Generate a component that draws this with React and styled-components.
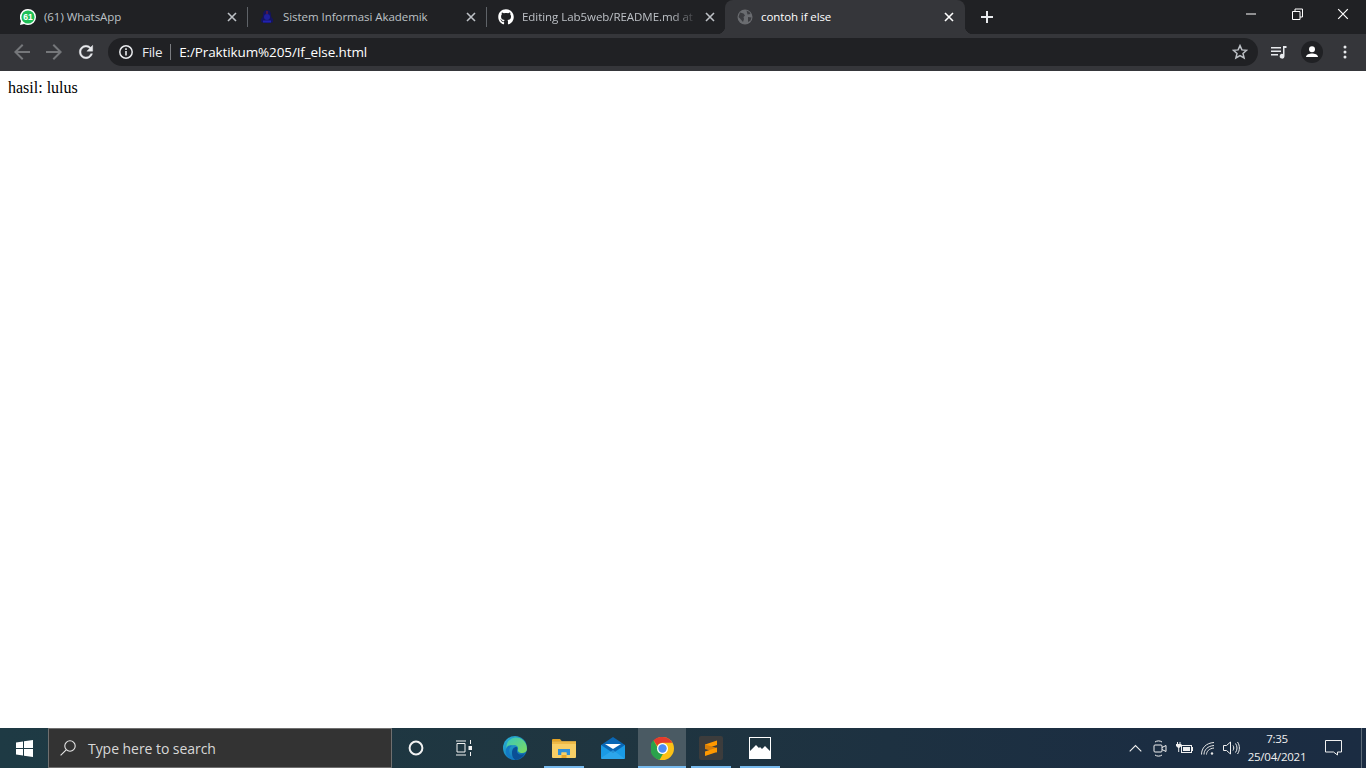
import React from "react";
import styled, { createGlobalStyle } from "styled-components";
import { FaGithub } from "react-icons/fa";

const Global = createGlobalStyle`
  html, body { margin: 0; padding: 0; overflow: hidden; background: #fff; }
`;

const UI = `"Open Sans", "Noto Sans", "Liberation Sans", sans-serif`;

const Page = styled.div`
  display: flex;
  flex-direction: column;
  width: 1366px;
  height: 768px;
`;

/* ---------- tab strip ---------- */
const TabStrip = styled.div`
  display: flex;
  align-items: stretch;
  height: 34px;
  padding-left: 8px;
  background: #202124;
  flex: none;
`;
const Tab = styled.div`
  position: relative;
  display: flex;
  align-items: center;
  width: ${(p) => (p.$active ? "240px" : "239px")};
  padding: 0 ${(p) => (p.$active ? "8px" : "7px")} 0 12px;
  box-sizing: border-box;
  background: ${(p) => (p.$active ? "#35363a" : "transparent")};
  border-radius: 8px 8px 0 0;
  ${(p) =>
    p.$active
      ? `
    &::before, &::after {
      content: "";
      position: absolute;
      bottom: 0;
      width: 8px;
      height: 8px;
    }
    &::before { left: -8px; background: radial-gradient(circle at 0 0, transparent 8px, #35363a 8.5px); }
    &::after { right: -8px; background: radial-gradient(circle at 100% 0, transparent 8px, #35363a 8.5px); }
  `
      : ""}
  ${(p) =>
    p.$divider
      ? `
    &::after {
      content: "";
      position: absolute;
      right: -1px;
      top: 7px;
      width: 1px;
      height: 20px;
      background: #5f6368;
    }
  `
      : ""}
`;
const Favicon = styled.span`
  display: flex;
  width: 16px;
  height: 16px;
  flex: none;
  margin-right: 8px;
  color: #fff;
`;
const TabTitle = styled.span`
  flex: 1;
  min-width: 0;
  padding-bottom: 2px;
  overflow: hidden;
  white-space: nowrap;
  font: ${(p) => (p.$active ? 500 : 400)} 11.5px ${UI};
  letter-spacing: ${(p) => (p.$active ? "-0.1px" : "-0.05px")};
  color: ${(p) => (p.$active ? "#fff" : "#bdc1c6")};
  ${(p) =>
    p.$fade
      ? `mask-image: linear-gradient(to right, #000 85%, transparent 100%);`
      : ""}
`;
const TabClose = styled.span`
  display: flex;
  align-items: center;
  justify-content: center;
  width: 16px;
  height: 16px;
  flex: none;
  margin-left: 4px;
  color: ${(p) => (p.$active ? "#fff" : "#bdc1c6")};
`;
const NewTab = styled.div`
  display: flex;
  align-items: center;
  justify-content: center;
  width: 28px;
  margin-left: 8px;
  color: #e8eaed;
`;
const Spacer = styled.div`
  flex: 1;
`;
const WinButton = styled.div`
  display: flex;
  align-items: flex-start;
  justify-content: center;
  width: 46px;
  padding-top: 8px;
  box-sizing: border-box;
  color: #fff;
`;

/* ---------- toolbar ---------- */
const Toolbar = styled.div`
  display: flex;
  align-items: center;
  height: 37px;
  padding: 0 5px 1px 6px;
  box-sizing: border-box;
  background: #35363a;
  flex: none;
`;
const NavButton = styled.div`
  display: flex;
  align-items: center;
  justify-content: center;
  width: 32px;
  height: 28px;
  flex: none;
  color: ${(p) => (p.$off ? "#75777a" : "#e8eaed")};
`;
const Omnibox = styled.div`
  display: flex;
  align-items: center;
  flex: 1;
  height: 28px;
  margin-left: 6px;
  margin-right: 4px;
  padding: 0 10px 0 10px;
  border-radius: 14px;
  background: #202124;
`;
const InfoSlot = styled.span`
  display: flex;
  width: 16px;
  height: 16px;
  margin-right: 8px;
  color: #e8eaed;
`;
const Scheme = styled.span`
  font: 400 13.5px ${UI};
  letter-spacing: -0.3px;
  color: #e8eaed;
`;
const Divider = styled.span`
  width: 1px;
  height: 16px;
  margin: 0 8px 0 8px;
  background: #7a7c80;
`;
const Url = styled.span`
  flex: 1;
  font: 400 13.5px ${UI};
  letter-spacing: -0.12px;
  color: #fff;
`;
const StarSlot = styled.span`
  display: flex;
  color: #bdc1c6;
`;
const ToolIcon = styled.div`
  display: flex;
  align-items: center;
  justify-content: center;
  width: 33px;
  height: 28px;
  flex: none;
  color: #e8eaed;
`;

/* ---------- page ---------- */
const Content = styled.main`
  flex: 1;
  padding: 8px;
  background: #fff;
  color: #000;
  font: 16px/18px "Liberation Serif", serif;
`;

/* ---------- taskbar ---------- */
const Taskbar = styled.footer`
  display: flex;
  align-items: stretch;
  height: 40px;
  flex: none;
  background: linear-gradient(to right, #1e3a44 0%, #1f3540 45%, #1b2d42 85%, #1b2c42 100%);
  color: #fff;
`;
const StartButton = styled.div`
  display: flex;
  align-items: center;
  justify-content: center;
  width: 48px;
`;
const SearchBox = styled.div`
  display: flex;
  align-items: center;
  width: 344px;
  padding-left: 11px;
  box-sizing: border-box;
  background: #333333;
  border: 1px solid #6f6f6f;
`;
const SearchText = styled.span`
  margin-left: 12px;
  font: 400 14px ${UI};
  letter-spacing: -0.05px;
  color: #d8d8d8;
`;
const TaskItem = styled.div`
  position: relative;
  display: flex;
  align-items: center;
  justify-content: center;
  width: 48px;
  margin-left: ${(p) => p.$ml || 0}px;
  background: ${(p) => (p.$focus ? "#4a5a63" : "transparent")};
  ${(p) =>
    p.$running
      ? `
    &::after {
      content: "";
      position: absolute;
      bottom: 0;
      left: ${p.$focus ? 0 : 4}px;
      right: ${p.$focus ? 0 : 4}px;
      height: 2px;
      background: #76b9ed;
    }
  `
      : ""}
`;
const Tray = styled.div`
  display: flex;
  align-items: center;
  margin-left: auto;
`;
const TrayIcon = styled.span`
  display: flex;
  align-items: center;
  justify-content: center;
  width: ${(p) => p.$w || 24}px;
`;
const Clock = styled.div`
  width: 70px;
  padding-bottom: 1px;
  text-align: center;
  font: 400 11.5px/18px ${UI};
  letter-spacing: -0.25px;
  color: #f0f0f0;
`;
const ClockLine = styled.div``;
const Notify = styled.div`
  display: flex;
  align-items: center;
  justify-content: center;
  width: 42px;
  padding-right: 7px;
`;
const ShowDesktop = styled.div`
  align-self: stretch;
  width: 5px;
  border-left: 1px solid #5d6b78;
  box-sizing: border-box;
`;

/* ---------- drawings ---------- */
const X = ({ s = 10, w = 1.6 }) => (
  <svg width={s} height={s} viewBox="0 0 10 10">
    <path d="M1 1l8 8M9 1L1 9" stroke="currentColor" strokeWidth={w} fill="none" />
  </svg>
);
const WhatsApp = () => (
  <svg width="16" height="16" viewBox="0 0 16 16">
    <path d="M8 0a8 8 0 0 1 0 16c-1.400 0-2.800-.4-3.900-1L0 16l1-4A8 8 0 0 1 8 0z" fill="#fff" />
    <circle cx="8" cy="8" r="6.600" fill="#1fbf57" />
    <text x="8" y="11" textAnchor="middle" fontSize="8.500" fontWeight="700" fontFamily="Liberation Sans, sans-serif" fill="#fff">61</text>
  </svg>
);
const Crest = () => (
  <svg width="16" height="16" viewBox="0 0 16 16">
    <path d="M8 1c3 0 4 2.500 4 5 0 2 1 3 2 4v3c-1 1.500-10 1.500-12 0v-3c1-1 2-2 2-4 0-2.500 1-5 4-5z" fill="#14145e" />
    <circle cx="8" cy="8" r="3" fill="#1f1f9c" />
    <path d="M7.500 2h1v3h-1z" fill="#8a1f30" />
    <path d="M4 11.500h8v2H4z" fill="#2222b0" />
  </svg>
);
const Globe = () => (
  <svg width="16" height="16" viewBox="0 0 16 16">
    <circle cx="8" cy="8" r="7.500" fill="#6a6c70" />
    <path d="M3 3.500l3.500 1 1.500 2-1.500 1.500.5 2-1 3L3 9.500 1.500 8zM9.500 1.500l3 1.500 1 2-3 .5zM11 8l3.500.5-1 3-2.500 1.500z" fill="#3c3d41" />
  </svg>
);
const Back = () => (
  <svg width="16" height="16" viewBox="0 0 16 16">
    <path d="M16 7H3.830l5.590-5.590L8 0 0 8l8 8 1.410-1.410L3.830 9H16z" fill="currentColor" />
  </svg>
);
const Forward = () => (
  <svg width="16" height="16" viewBox="0 0 16 16">
    <path d="M0 7h12.170L6.580 1.410 8 0l8 8-8 8-1.410-1.410L12.170 9H0z" fill="currentColor" />
  </svg>
);
const Reload = () => (
  <svg width="20" height="20" viewBox="0 0 24 24">
    <path d="M17.650 6.350C16.200 4.900 14.210 4 12 4c-4.420 0-7.990 3.580-7.990 8s3.570 8 7.990 8c3.730 0 6.840-2.550 7.730-6h-2.080c-.82 2.330-3.040 4-5.650 4-3.310 0-6-2.690-6-6s2.690-6 6-6c1.660 0 3.140.69 4.220 1.780L13 11h7V4l-2.350 2.350z" fill="currentColor" stroke="currentColor" strokeWidth="0.500" />
  </svg>
);
const Info = () => (
  <svg width="16" height="16" viewBox="0 0 16 16">
    <circle cx="8" cy="8" r="6.200" fill="none" stroke="currentColor" strokeWidth="1.500" />
    <path d="M7.200 7h1.600v4.500H7.200zM7.200 4.300h1.600v1.600H7.200z" fill="currentColor" />
  </svg>
);
const Star = () => (
  <svg width="16" height="16" viewBox="0 0 16 16">
    <path d="M8 1.600l1.900 4.300 4.700.4-3.600 3.100 1.100 4.600L8 11.600 3.900 14l1.100-4.600-3.600-3.100 4.700-.4z" fill="none" stroke="currentColor" strokeWidth="1.500" />
  </svg>
);
const Media = () => (
  <svg width="16" height="14" viewBox="0 0 16 14">
    <path d="M0 2h10v1.400H0zM0 5.500h10v1.400H0zM0 9h7v1.400H0z" fill="currentColor" />
    <path d="M12 1h3.500v2H13.500v8.200a2.400 2.400 0 1 1-1.500-2.200z" fill="currentColor" />
  </svg>
);
const Avatar = () => (
  <svg width="22" height="22" viewBox="0 0 22 22">
    <circle cx="11" cy="11" r="11" fill="#202124" />
    <circle cx="11" cy="8.200" r="3" fill="#fff" />
    <path d="M5 16c0-2.500 3.500-3.600 6-3.600s6 1.100 6 3.600z" fill="#fff" />
  </svg>
);
const Kebab = () => (
  <svg width="4" height="14" viewBox="0 0 4 14">
    <circle cx="2" cy="2" r="1.500" fill="currentColor" />
    <circle cx="2" cy="7" r="1.500" fill="currentColor" />
    <circle cx="2" cy="12" r="1.500" fill="currentColor" />
  </svg>
);
const Plus = () => (
  <svg width="14" height="14" viewBox="0 0 14 14">
    <path d="M6 1h2v5h5v2H8v5H6V8H1V6h5z" fill="currentColor" />
  </svg>
);
const Minimize = () => (
  <svg width="10" height="14" viewBox="0 0 10 14">
    <path d="M0 6h10" stroke="currentColor" strokeWidth="1" />
  </svg>
);
const Restore = () => (
  <svg width="11" height="14" viewBox="0 0 11 14" fill="none" stroke="currentColor">
    <path d="M.5 3.500h7.500v8H.5zM3 3.500v-2.500h7.500v8H8" />
  </svg>
);
const WinLogo = () => (
  <svg width="17" height="17" viewBox="0 0 17 17">
    <path d="M0 2.500l7-1v6.500H0zM8 1.300L17 0v8H8zM0 9h7v6.500l-7-1zM8 9h9v8l-9-1.300z" fill="#fff" />
  </svg>
);
const SearchGlass = () => (
  <svg width="16" height="16" viewBox="0 0 16 16" fill="none" stroke="#e6e6e6" strokeWidth="1.100">
    <circle cx="10" cy="6" r="5.200" />
    <path d="M6.200 9.800L.6 15.400" />
  </svg>
);
const Cortana = () => (
  <svg width="16" height="16" viewBox="0 0 16 16">
    <circle cx="8" cy="8" r="6.400" fill="none" stroke="#f2f2f2" strokeWidth="2" />
  </svg>
);
const TaskView = () => (
  <svg width="16" height="16" viewBox="0 0 16 16" fill="none" stroke="#f2f2f2" strokeWidth="1">
    <path d="M0 1h10M1 3.500h8v8.500H1zM0 15h10M14.500 0v4M14.500 12v4" />
    <path d="M12.500 6h4v4h-4z" fill="#f2f2f2" stroke="none" />
  </svg>
);
const Edge = () => (
  <svg width="24" height="24" viewBox="0 0 24 24">
    <defs>
      <linearGradient id="edgeA" x1="0" y1="0" x2="1" y2="1">
        <stop offset="0" stopColor="#2bb6d8" />
        <stop offset="1" stopColor="#0c5fa8" />
      </linearGradient>
      <linearGradient id="edgeB" x1="0" y1="0" x2="1" y2="1">
        <stop offset="0" stopColor="#39c7bd" />
        <stop offset="1" stopColor="#7fdb5c" />
      </linearGradient>
    </defs>
    <circle cx="12" cy="12" r="12" fill="url(#edgeA)" />
    <path d="M8 3C14 -1 24 3 24 13c0 3-3 4.500-6 4-3-.5-3.500-2.500-3-4 .5-2-1-4-4-4-3.500 0-6.500 2.500-7.500 5C3 9 4 5 8 3z" fill="url(#edgeB)" />
    <path d="M9 17c0-4 2-6 4.500-6 1 .5 1 1.500.5 3-.5 2.500 1.500 5 5 4.500 1 0 2-.5 2.500-1-2 4-5 6-9 6.500-2.500-1-3.500-4-3.500-7z" fill="#0b4f96" />
    <path d="M10 10c-2.500 0-4.500 3-3.500 7 .6 2.500 2.500 5 5.500 6.500C10 24 7 23 5 21 2 18 2 12 5 10c2-1.300 4-1 5 0z" fill="#1379c4" />
  </svg>
);
const Explorer = () => (
  <svg width="24" height="20" viewBox="0 0 24 20">
    <path d="M0 2a1 1 0 0 1 1-1h7l2 2.500H0z" fill="#e3a325" />
    <path d="M0 3.500h24V19a1 1 0 0 1-1 1H1a1 1 0 0 1-1-1z" fill="#f7cf66" />
    <path d="M0 3h24v3H0z" fill="#e9b13a" opacity="0.7" />
    <path d="M6 11h12v6h-3.500v-2.500h-5V17H6z" fill="#2f8fd8" />
    <path d="M9.500 14.500h5V20h-5z" fill="#f7cf66" />
    <path d="M9.500 17h5v3h-5z" fill="#e8a72a" />
  </svg>
);
const Mail = () => (
  <svg width="24" height="22" viewBox="0 0 24 22">
    <path d="M0 8L12 0l12 8v1L12 16 0 9z" fill="#0a67b5" />
    <path d="M4 7h16l-8 5z" fill="#fff" />
    <path d="M0 8l12 8 12-8v13a1 1 0 0 1-1 1H1a1 1 0 0 1-1-1z" fill="#1a9be6" />
    <path d="M0 21l12-8 12 9H1z" fill="#38aeee" opacity="0.6" />
  </svg>
);
const Chrome = () => (
  <svg width="23" height="23" viewBox="0 0 48 48">
    <circle cx="24" cy="24" r="24" fill="#fbc116" />
    <path d="M24 0a24 24 0 0 1 20.800 12H24a12 12 0 0 0-10.900 7L5 7A24 24 0 0 1 24 0z" fill="#e33b2e" />
    <path d="M5 7l10 17a10 10 0 0 0 11 9.500L18 47.300A24 24 0 0 1 5 7z" fill="#2ba24c" />
    <circle cx="24" cy="24" r="11.500" fill="#fff" />
    <circle cx="24" cy="24" r="8.800" fill="#4c8bf5" />
  </svg>
);
const Sublime = () => (
  <svg width="24" height="24" viewBox="0 0 24 24">
    <rect width="24" height="24" rx="2" fill="#3c3c3c" />
    <path d="M18 4.500v4.500L6 13V8.500z" fill="#ff9800" />
    <path d="M6 8.500L18 12v4.500L6 13z" fill="#d57d0a" />
    <path d="M18 11.500v4.500L6 20v-4.500z" fill="#ff9800" />
  </svg>
);
const Photos = () => (
  <svg width="22" height="22" viewBox="0 0 22 22">
    <rect x="0.500" y="0.500" width="21" height="21" fill="#1f3540" stroke="#fff" />
    <path d="M0 22v-7l7-7 3 3 1-1 2 2 3-3 6 6v7z" fill="#fff" />
  </svg>
);
const Chevron = () => (
  <svg width="13" height="8" viewBox="0 0 13 8">
    <path d="M.7 7.300L6.500 1.500l5.800 5.800" fill="none" stroke="#f0f0f0" strokeWidth="1.100" />
  </svg>
);
const Meet = () => (
  <svg width="15" height="17" viewBox="0 0 15 17" fill="none" stroke="#f0f0f0" strokeWidth="1">
    <path d="M2 2c2-1.500 5-1.500 7 0M2 15c2 1.500 5 1.500 7 0" />
    <rect x="1" y="5" width="8" height="7" rx="1" />
    <path d="M9 7.500l4-2v6l-4-2" />
  </svg>
);
const Battery = () => (
  <svg width="17" height="12" viewBox="0 0 17 12">
    <rect x="5.500" y="3.500" width="10" height="7" fill="none" stroke="#f0f0f0" />
    <rect x="7" y="5" width="7" height="4" fill="#f0f0f0" />
    <path d="M1 0h1v2H1zM3.500 0h1v2h-1zM0 2h5.500v2L3.200 6v4h-1V6L0 4z" fill="#f0f0f0" />
    <path d="M16 5h1v4h-1z" fill="#f0f0f0" />
  </svg>
);
const Wifi = () => (
  <svg width="14" height="13" viewBox="0 0 14 13" fill="none" stroke="#e6e6e6" strokeWidth="1">
    <path d="M.5 12.500C.5 6 5 1 13 .5M3 12.500C3 8 6.500 4 13 3.500M5.500 12.500c0-3 2.500-6 7.500-6.500" />
    <circle cx="11" cy="11.500" r="1.200" fill="#e6e6e6" stroke="none" />
  </svg>
);
const Volume = () => (
  <svg width="17" height="14" viewBox="0 0 17 14" fill="none" stroke="#f0f0f0" strokeWidth="1">
    <path d="M.5 4.500h3L7.500 1v12l-4-3.500h-3z" />
    <path d="M10 4.500c1 1.500 1 3.500 0 5M12.500 2.500c2 2.500 2 6.500 0 9M14.500 1c2.500 3.500 2.500 8.500 0 12" />
  </svg>
);
const Bubble = () => (
  <svg width="17" height="16" viewBox="0 0 17 16" fill="none" stroke="#f0f0f0" strokeWidth="1">
    <path d="M.5.500h16v11.500h-4v3l-4-3H.5z" />
  </svg>
);

const tabs = [
  { title: "(61) WhatsApp", icon: <WhatsApp />, divider: true },
  { title: "Sistem Informasi Akademik", icon: <Crest />, divider: true },
  { title: "Editing Lab5web/README.md at", icon: <FaGithub size={16} />, fade: true },
  { title: "contoh if else", icon: <Globe />, active: true },
];

export default function App() {
  return (
    <Page>
      <Global />
      <TabStrip>
        {tabs.map((t) => (
          <Tab key={t.title} $active={t.active} $divider={t.divider}>
            <Favicon>{t.icon}</Favicon>
            <TabTitle $active={t.active} $fade={t.fade}>{t.title}</TabTitle>
            <TabClose $active={t.active}><X /></TabClose>
          </Tab>
        ))}
        <NewTab><Plus /></NewTab>
        <Spacer />
        <WinButton><Minimize /></WinButton>
        <WinButton><Restore /></WinButton>
        <WinButton><X s={12} w={1} /></WinButton>
      </TabStrip>
      <Toolbar>
        <NavButton $off><Back /></NavButton>
        <NavButton $off><Forward /></NavButton>
        <NavButton><Reload /></NavButton>
        <Omnibox>
          <InfoSlot><Info /></InfoSlot>
          <Scheme>File</Scheme>
          <Divider />
          <Url>E:/Praktikum%205/If_else.html</Url>
          <StarSlot><Star /></StarSlot>
        </Omnibox>
        <ToolIcon><Media /></ToolIcon>
        <ToolIcon><Avatar /></ToolIcon>
        <ToolIcon><Kebab /></ToolIcon>
      </Toolbar>
      <Content>hasil: lulus</Content>
      <Taskbar>
        <StartButton><WinLogo /></StartButton>
        <SearchBox>
          <SearchGlass />
          <SearchText>Type here to search</SearchText>
        </SearchBox>
        <TaskItem><Cortana /></TaskItem>
        <TaskItem><TaskView /></TaskItem>
        <TaskItem $ml={3}><Edge /></TaskItem>
        <TaskItem $ml={1} $running><Explorer /></TaskItem>
        <TaskItem $ml={1}><Mail /></TaskItem>
        <TaskItem $ml={1} $running $focus><Chrome /></TaskItem>
        <TaskItem $ml={1} $running><Sublime /></TaskItem>
        <TaskItem $ml={1} $running><Photos /></TaskItem>
        <Tray>
          <TrayIcon><Chevron /></TrayIcon>
          <TrayIcon $w={26}><Meet /></TrayIcon>
          <TrayIcon $w={22}><Battery /></TrayIcon>
          <TrayIcon $w={25}><Wifi /></TrayIcon>
          <TrayIcon $w={22}><Volume /></TrayIcon>
          <Clock>
            <ClockLine>7:35</ClockLine>
            <ClockLine>25/04/2021</ClockLine>
          </Clock>
          <Notify><Bubble /></Notify>
          <ShowDesktop />
        </Tray>
      </Taskbar>
    </Page>
  );
}
